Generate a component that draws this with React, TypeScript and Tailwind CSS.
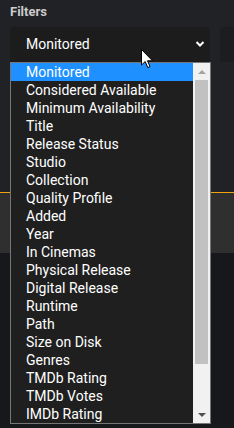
const options = [
  'Monitored',
  'Considered Available',
  'Minimum Availability',
  'Title',
  'Release Status',
  'Studio',
  'Collection',
  'Quality Profile',
  'Added',
  'Year',
  'In Cinemas',
  'Physical Release',
  'Digital Release',
  'Runtime',
  'Path',
  'Size on Disk',
  'Genres',
  'TMDb Rating',
  'TMDb Votes',
  'IMDb Rating',
];

function Chevron() {
  return (
    <svg width="10" height="8" viewBox="0 0 10 8" className="text-white">
      <path d="M1.5 2 L5 5.5 L8.5 2" fill="none" stroke="currentColor" strokeWidth="2" />
    </svg>
  );
}

function Cursor() {
  return (
    <svg width="13" height="20" viewBox="0 0 13 20" className="absolute left-[141px] top-[49px]">
      <path
        d="M0.5 0.5 L0.5 16 L4.2 12.5 L6.8 18.6 L9 17.6 L6.5 11.8 L11.5 11.8 Z"
        fill="#fff"
        stroke="#000"
        strokeWidth="1"
        strokeLinejoin="round"
      />
    </svg>
  );
}

export default function App() {
  return (
    <div className="relative h-[428px] w-[234px] overflow-hidden bg-[#202226] font-['Roboto',sans-serif]">
      {/* page behind the dropdown */}
      <div className="flex flex-col">
        <div className="h-[27px] pl-[10px] pt-[2px] text-[13px] font-bold text-[#cbcbcb]">Filters</div>
        <div className="flex h-[35px] gap-[10px] pl-[10px]">
          <div className="flex w-[200px] items-center justify-between rounded-t-[4px] bg-[#1c1c1d] pl-[16px] pr-[5px] pb-[1px] text-[14px] text-white">
            <span>Monitored</span>
            <Chevron />
          </div>
          <div className="flex-1 rounded-l-[4px] bg-[#1b1d21]" />
        </div>
        <div className="h-[130px]" />
        <div className="h-px bg-[#f0a30a]" />
        <div className="h-[60px] bg-[#2f2f2f]" />
        <div className="h-[175px] bg-[#16181b]" />
      </div>

      {/* open list box */}
      <div className="absolute left-[10px] top-[62px] flex w-[201px] border border-[#767676] bg-[#1f1f1f]">
        <ul className="flex-1 text-[14px] leading-[18px] text-white">
          {options.map((o, i) => (
            <li key={o} className={i === 0 ? 'h-[18px] bg-[#1e90ff] pl-[15px]' : 'h-[18px] pl-[15px]'}>
              {o}
            </li>
          ))}
        </ul>
        <div className="flex w-[17px] flex-col bg-[#f1f1f1]">
          <div className="flex h-[17px] items-center justify-center">
            <div className="h-0 w-0 border-x-[4px] border-b-[4px] border-x-transparent border-b-[#a3a3a3]" />
          </div>
          <div className="mx-[2px] h-[284px] bg-[#c1c1c1]" />
          <div className="flex-1" />
          <div className="flex h-[17px] items-center justify-center">
            <div className="h-0 w-0 border-x-[4px] border-t-[4px] border-x-transparent border-t-[#505050]" />
          </div>
        </div>
      </div>

      <Cursor />
    </div>
  );
}
